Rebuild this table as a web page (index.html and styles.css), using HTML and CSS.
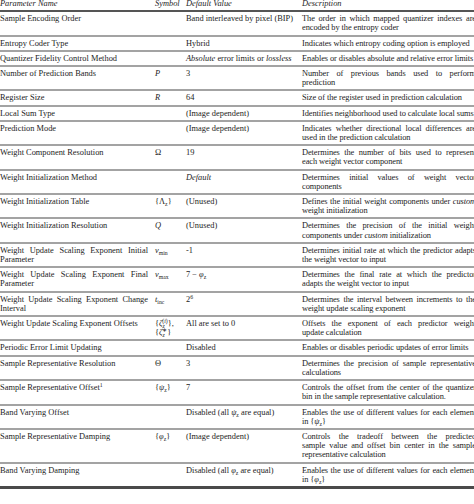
FILE: index.html
```html
<!DOCTYPE html>
<html>
<head>
<meta charset="utf-8">
<link rel="stylesheet" href="styles.css">
</head>
<body>
<table class="params">
  <colgroup>
    <col class="c-name"><col class="c-sym"><col class="c-def"><col class="c-desc">
  </colgroup>
  <thead>
    <tr><th>Parameter Name</th><th>Symbol</th><th>Default Value</th><th>Description</th></tr>
  </thead>
  <tbody>
    <tr><td>Sample Encoding Order</td><td></td><td>Band interleaved by pixel (BIP)</td><td><span class="ln">The order in which mapped quantizer indexes are</span>encoded by the entropy coder</td></tr>
    <tr><td>Entropy Coder Type</td><td></td><td>Hybrid</td><td>Indicates which entropy coding option is employed</td></tr>
    <tr><td>Quantizer Fidelity Control Method</td><td></td><td><i>Absolute</i> error limits or <i>lossless</i></td><td>Enables or disables absolute and relative error limits</td></tr>
    <tr><td>Number of Prediction Bands</td><td><i>P</i></td><td>3</td><td><span class="ln">Number of previous bands used to perform</span>prediction</td></tr>
    <tr><td>Register Size</td><td><i>R</i></td><td>64</td><td>Size of the register used in prediction calculation</td></tr>
    <tr><td>Local Sum Type</td><td></td><td>(Image dependent)</td><td>Identifies neighborhood used to calculate local sums</td></tr>
    <tr><td>Prediction Mode</td><td></td><td>(Image dependent)</td><td><span class="ln">Indicates whether directional local differences are</span>used in the prediction calculation</td></tr>
    <tr><td>Weight Component Resolution</td><td>Ω</td><td>19</td><td><span class="ln">Determines the number of bits used to represent</span>each weight vector component</td></tr>
    <tr><td>Weight Initialization Method</td><td></td><td><i>Default</i></td><td><span class="ln">Determines initial values of weight vector</span>components</td></tr>
    <tr><td>Weight Initialization Table</td><td>{Λ<span class="sb">z</span>}</td><td>(Unused)</td><td><span class="ln">Defines the initial weight components under <i>custom</i></span>weight initialization</td></tr>
    <tr><td>Weight Initialization Resolution</td><td><i>Q</i></td><td>(Unused)</td><td><span class="ln">Determines the precision of the initial weight</span>components under <i>custom</i> initialization</td></tr>
    <tr><td><span class="ln">Weight Update Scaling Exponent Initial</span>Parameter</td><td><i>ν</i><span class="sb">min</span></td><td>-1</td><td><span class="ln">Determines initial rate at which the predictor adapts</span>the weight vector to input</td></tr>
    <tr><td><span class="ln">Weight Update Scaling Exponent Final</span>Parameter</td><td><i>ν</i><span class="sb">max</span></td><td>7 − <i>φ</i><span class="sb">z</span></td><td><span class="ln">Determines the final rate at which the predictor</span>adapts the weight vector to input</td></tr>
    <tr><td><span class="ln">Weight Update Scaling Exponent Change</span>Interval</td><td><i>t</i><span class="sb">inc</span></td><td>2<span class="sp">6</span></td><td><span class="ln">Determines the interval between increments to the</span>weight update scaling exponent</td></tr>
    <tr><td>Weight Update Scaling Exponent Offsets</td><td>{<i>ζ</i><span class="sb zsub"><i>z</i></span><span class="sp">(<i>i</i>)</span>},<br>{<i>ζ</i><span class="sb zsub"><i>z</i></span><span class="sp">∗</span>}</td><td>All are set to 0</td><td><span class="ln">Offsets the exponent of each predictor weight</span>update calculation</td></tr>
    <tr><td>Periodic Error Limit Updating</td><td></td><td>Disabled</td><td>Enables or disables periodic updates of error limits</td></tr>
    <tr><td>Sample Representative Resolution</td><td>Θ</td><td>3</td><td><span class="ln">Determines the precision of sample representative</span>calculations</td></tr>
    <tr><td>Sample Representative Offset<span class="sp">1</span></td><td>{<i>ψ</i><span class="sb">z</span>}</td><td>7</td><td><span class="ln">Controls the offset from the center of the quantizer</span>bin in the sample representative calculation.</td></tr>
    <tr><td>Band Varying Offset</td><td></td><td>Disabled (all <i>ψ</i><span class="sb">z</span> are equal)</td><td><span class="ln">Enables the use of different values for each element</span>in {<i>ψ</i><span class="sb">z</span>}</td></tr>
    <tr><td>Sample Representative Damping</td><td>{<i>φ</i><span class="sb">z</span>}</td><td>(Image dependent)</td><td><span class="ln">Controls the tradeoff between the predicted</span><span class="ln">sample value and offset bin center in the sample</span>representative calculation</td></tr>
    <tr class="last"><td>Band Varying Damping</td><td></td><td>Disabled (all <i>φ</i><span class="sb">z</span> are equal)</td><td><span class="ln">Enables the use of different values for each element</span>in {<i>φ</i><span class="sb">z</span>}</td></tr>
  </tbody>
</table>
</body>
</html>
```
FILE: styles.css
```css
html, body {
  margin: 0;
  padding: 0;
  overflow: hidden;
  background: #ffffff;
}
body {
  width: 474px;
  height: 504px;
  font-family: "Liberation Serif", "Times New Roman", serif;
  font-size: 8.4px;
  line-height: 9.2px;
  color: #1c1c1c;
}
.params {
  border-collapse: collapse;
  table-layout: fixed;
  width: 476px;
  margin-top: -3px;
}
.c-name { width: 155px; }
.c-sym { width: 31px; }
.c-def { width: 116px; }
.c-desc { width: 174px; }

.params th,
.params td {
  padding: 2px 0;
  vertical-align: top;
  text-align: left;
  border-bottom: 2px solid #a3a3a3;
}
.params th {
  font-style: italic;
  font-weight: normal;
  border-bottom: 2px solid #555555;
}
.params td:first-child {
  padding-right: 7px;
}
.params td:nth-child(3) {
  padding-right: 6px;
}
.params td:nth-child(4) {
  letter-spacing: -0.08px;
}
.ln {
  display: block;
  text-align: justify;
  text-align-last: justify;
}
.params tr.last td {
  border-bottom: 3px solid #4a4a4a;
}
.sb {
  font-size: 0.68em;
  line-height: 0;
  vertical-align: -0.3em;
}
.sp {
  font-size: 0.68em;
  line-height: 0;
  vertical-align: 0.5em;
}
.zsub {
  margin-right: -2.4px;
}
```
